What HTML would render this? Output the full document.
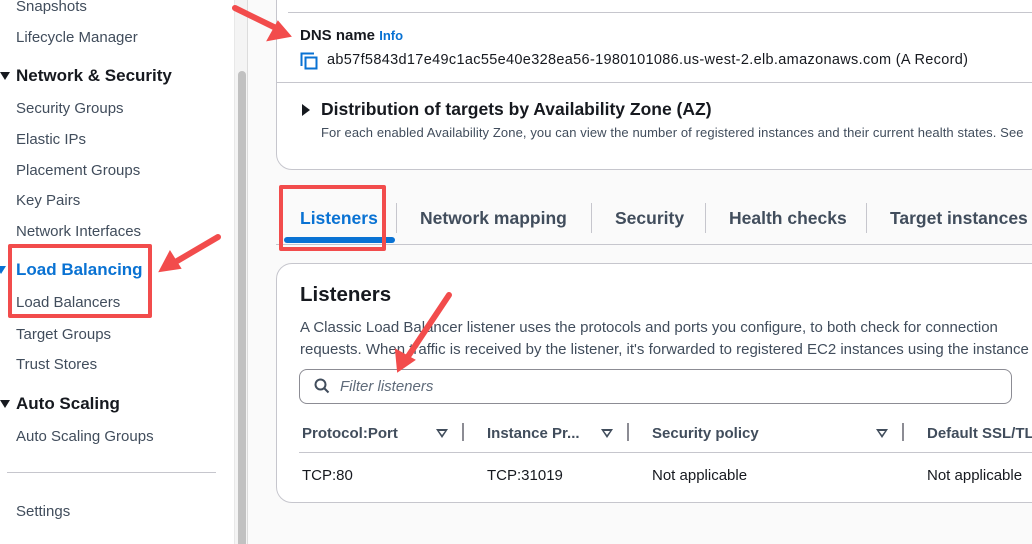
<!DOCTYPE html>
<html><head><meta charset="utf-8"><style>
*{margin:0;padding:0;box-sizing:border-box}
html,body{overflow:hidden}
body{width:1032px;height:544px;background:#fafafa;font-family:"Liberation Sans",Arial,sans-serif;color:#16191f;position:relative}
.a{position:absolute;white-space:nowrap}
.side{position:absolute;left:0;top:0;width:234px;height:544px;background:#fff}
.si{position:absolute;left:16px;font-size:15px;color:#414d5c;white-space:nowrap}
.sh{position:absolute;left:16px;font-size:17px;font-weight:bold;color:#16191f;white-space:nowrap}
.tri{position:absolute;left:0;width:0;height:0;border-left:5px solid transparent;border-right:5px solid transparent;border-top:8px solid #16191f}
.tab{position:absolute;top:208px;font-size:17.5px;font-weight:bold;color:#414d5c;white-space:nowrap}
.tsep{position:absolute;top:203px;width:1px;height:30px;background:#c6c6cd}
.th{position:absolute;top:425px;font-size:15px;font-weight:bold;color:#414d5c;white-space:nowrap}
.td{position:absolute;top:467px;font-size:15px;color:#16191f;white-space:nowrap}
.dt{position:absolute;top:429px;width:0;height:0;border-left:6px solid transparent;border-right:6px solid transparent;border-top:9px solid #414d5c}
.dt:after{content:"";position:absolute;left:-3px;top:-7px;border-left:3px solid transparent;border-right:3px solid transparent;border-top:4px solid #fff}
.vs{position:absolute;top:423px;width:2px;height:18px;background:#8c8c94}
</style></head><body>
<div class="side">
<div class="si" style="top:-2px">Snapshots</div>
<div class="si" style="top:29px">Lifecycle Manager</div>
<div class="tri" style="top:72px"></div>
<div class="sh" style="top:66px">Network &amp; Security</div>
<div class="si" style="top:100px">Security Groups</div>
<div class="si" style="top:131px">Elastic IPs</div>
<div class="si" style="top:162px">Placement Groups</div>
<div class="si" style="top:192px">Key Pairs</div>
<div class="si" style="top:223px">Network Interfaces</div>
<div class="tri" style="top:266px;left:-4px;border-top-color:#0972d3"></div>
<div class="sh" style="top:260px;color:#0972d3">Load Balancing</div>
<div class="si" style="top:294px">Load Balancers</div>
<div class="si" style="top:326px">Target Groups</div>
<div class="si" style="top:356px">Trust Stores</div>
<div class="tri" style="top:400px"></div>
<div class="sh" style="top:394px">Auto Scaling</div>
<div class="si" style="top:428px">Auto Scaling Groups</div>
<div class="a" style="left:7px;top:472px;width:209px;height:1px;background:#c6c6cd"></div>
<div class="si" style="top:503px">Settings</div>
</div>
<div class="a" style="left:234px;top:0;width:14px;height:544px;background:#f4f4f4;border-left:1px solid #e8e8e8;border-right:1px solid #dcdcdc"></div>
<div class="a" style="left:238px;top:71px;width:8px;height:473px;border-radius:4px 4px 0 0;background:#c1c1c1"></div>

<div class="a" style="left:276px;top:-20px;width:770px;height:190px;background:#fff;border:1px solid #c6c6cd;border-radius:16px"></div>
<div class="a" style="left:288px;top:12px;width:744px;height:1px;background:#c6c6cd"></div>
<div class="a" style="left:276px;top:82px;width:756px;height:1px;background:#c6c6cd"></div>
<div class="a" style="left:300px;top:27px;font-size:15px;font-weight:bold">DNS name <span style="color:#0972d3;font-size:13px">Info</span></div>
<svg class="a" style="left:300px;top:52px" width="18" height="18" viewBox="0 0 18 18"><path d="M1.5 14V1.5H14" fill="none" stroke="#0972d3" stroke-width="2"/><rect x="5.5" y="5.5" width="11" height="11" fill="none" stroke="#0972d3" stroke-width="2"/></svg>
<div class="a" style="left:327px;top:52px;font-size:14.5px;letter-spacing:0.33px">ab57f5843d17e49c1ac55e40e328ea56-1980101086.us-west-2.elb.amazonaws.com (A Record)</div>
<div class="a" style="left:302px;top:104px;width:0;height:0;border-top:6px solid transparent;border-bottom:6px solid transparent;border-left:8px solid #16191f"></div>
<div class="a" style="left:321px;top:99px;font-size:17.5px;font-weight:bold">Distribution of targets by Availability Zone (AZ)</div>
<div class="a" style="left:321px;top:125px;font-size:13px;color:#414d5c;letter-spacing:0.1px">For each enabled Availability Zone, you can view the number of registered instances and their current health states. See</div>

<div class="a" style="left:276px;top:244px;width:756px;height:1px;background:#c6c6cd"></div>
<div class="tab" style="left:300px;color:#0972d3">Listeners</div>
<div class="a" style="left:284px;top:237px;width:111px;height:6px;border-radius:3px;background:#0972d3"></div>
<div class="tsep" style="left:396px"></div>
<div class="tab" style="left:420px">Network mapping</div>
<div class="tsep" style="left:591px"></div>
<div class="tab" style="left:615px">Security</div>
<div class="tsep" style="left:705px"></div>
<div class="tab" style="left:729px">Health checks</div>
<div class="tsep" style="left:866px"></div>
<div class="tab" style="left:890px">Target instances</div>

<div class="a" style="left:276px;top:263px;width:780px;height:240px;background:#fff;border:1px solid #c6c6cd;border-radius:16px"></div>
<div class="a" style="left:300px;top:283px;font-size:20.5px;font-weight:bold">Listeners</div>
<div class="a" style="left:300px;top:317px;font-size:15px;color:#414d5c;line-height:22px">A Classic Load Balancer listener uses the protocols and ports you configure, to both check for connection<br>requests. When traffic is received by the listener, it's forwarded to registered EC2 instances using the instance</div>
<div class="a" style="left:299px;top:369px;width:713px;height:35px;border:1px solid #8c8c94;border-radius:8px;background:#fff"></div>
<svg class="a" style="left:314px;top:378px" width="16" height="16" viewBox="0 0 16 16"><circle cx="6.5" cy="6.5" r="5" fill="none" stroke="#414d5c" stroke-width="2"/><path d="M10 10l4.5 4.5" stroke="#414d5c" stroke-width="2"/></svg>
<div class="a" style="left:340px;top:378px;font-size:15px;font-style:italic;color:#5f6b7a">Filter listeners</div>
<div class="th" style="left:302px">Protocol:Port</div>
<div class="dt" style="left:436px"></div><div class="vs" style="left:462px"></div>
<div class="th" style="left:487px">Instance Pr...</div>
<div class="dt" style="left:601px"></div><div class="vs" style="left:627px"></div>
<div class="th" style="left:652px">Security policy</div>
<div class="dt" style="left:876px"></div><div class="vs" style="left:902px"></div>
<div class="th" style="left:927px">Default SSL/TLS</div>
<div class="a" style="left:299px;top:452px;width:733px;height:1px;background:#c6c6cd"></div>
<div class="td" style="left:302px">TCP:80</div>
<div class="td" style="left:487px">TCP:31019</div>
<div class="td" style="left:652px">Not applicable</div>
<div class="td" style="left:927px">Not applicable</div>

<div class="a" style="left:8px;top:244px;width:144px;height:74px;border:4px solid #f24c4c;border-radius:2px"></div>
<div class="a" style="left:279px;top:185px;width:107px;height:66px;border:4px solid #f24c4c;border-radius:2px"></div>
<svg class="a" style="left:0;top:0" width="1032" height="544">
<g stroke="#f24c4c" stroke-width="6" stroke-linecap="round" fill="#f24c4c">
<line x1="235" y1="8" x2="280" y2="30"/>
<polygon points="290,36 268,40 278,22" stroke-width="2"/>
<line x1="218" y1="237" x2="172" y2="264"/>
<polygon points="160,271 170,252 180,268" stroke-width="2"/>
<line x1="449" y1="295" x2="405" y2="361"/>
<polygon points="398,371 396,350 414,360" stroke-width="2"/>
</g></svg>
</body></html>
